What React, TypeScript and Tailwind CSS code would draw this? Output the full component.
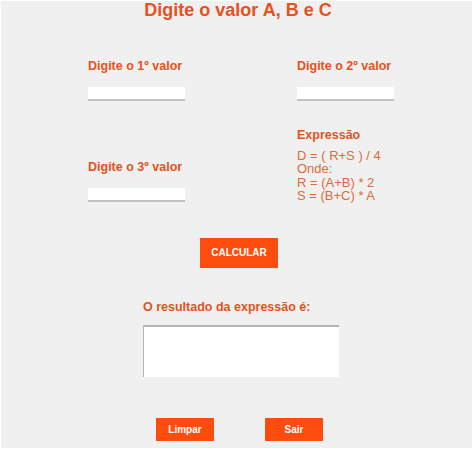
import React from 'react';

const font = { fontFamily: '"Liberation Sans", Arial, sans-serif' };

const Field: React.FC<{ label: string; className?: string }> = ({ label, className = '' }) => (
  <div className={`flex flex-col ${className}`}>
    <label className="text-[12.5px] leading-[15px] font-bold text-[#e8501c]">{label}</label>
    <input
      type="text"
      className="mt-[13px] w-[97px] h-[14px] bg-white border-b-2 border-[#c2c2c2] outline-none"
    />
  </div>
);

const App: React.FC = () => {
  return (
    <div className="min-h-[452px] bg-white" style={font}>
      <div className="ml-px mt-px w-[471px] h-[447px] bg-[#f0f0f0] flex flex-col">
        <h1 className="-mt-px h-[21px] text-center text-[18px] leading-[21px] font-bold text-[#e8501c] pl-[3px]">
          Digite o valor A, B e C
        </h1>

        <div className="mt-[38px] grid grid-cols-[209px_1fr] pl-[87px]">
          <div className="flex flex-col">
            <Field label="Digite o 1º valor" />
            <Field label="Digite o 3º valor" className="mt-[59px]" />
          </div>
          <div className="flex flex-col">
            <Field label="Digite o 2º valor" />
            <h2 className="mt-[27px] text-[12.5px] leading-[15px] font-bold text-[#e8501c]">Expressão</h2>
            <div className="mt-[6px] text-[13px] leading-[13.4px] text-[#e2693a]">
              <p>D = ( R+S ) / 4</p>
              <p>Onde:</p>
              <p>R = (A+B) * 2</p>
              <p>S = (B+C) * A</p>
            </div>
          </div>
        </div>

        <button className="mt-[35px] ml-[199px] w-[78px] h-[30px] bg-[#fd4c0b] text-white text-[10px] font-bold">
          CALCULAR
        </button>

        <p className="mt-[32px] ml-[142px] text-[12.5px] leading-[15px] font-bold text-[#e8501c]">
          O resultado da expressão é:
        </p>
        <textarea className="mt-[10px] ml-[142px] w-[196px] h-[52px] bg-white border-t-2 border-l border-[#b4b4b4] resize-none outline-none" />

        <div className="mt-[41px] ml-[155px] flex gap-[51px]">
          <button className="w-[58px] h-[23px] bg-[#fd4c0b] text-white text-[10px] font-bold">Limpar</button>
          <button className="w-[58px] h-[23px] bg-[#fd4c0b] text-white text-[10px] font-bold">Sair</button>
        </div>
      </div>
    </div>
  );
};

export default App;
